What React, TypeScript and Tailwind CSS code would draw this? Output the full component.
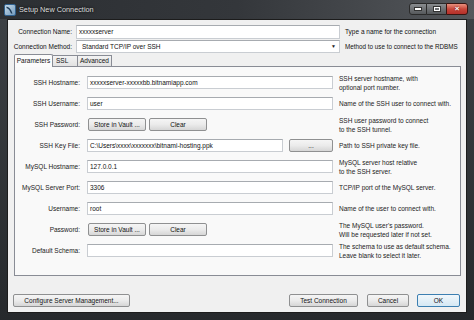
import React from "react";

const inputCls =
  "h-[13px] bg-white border border-[#c9cdd2] border-t-[#a7abb0] px-[2px] flex items-center text-[#111] overflow-hidden whitespace-nowrap";
const btnCls =
  "h-[13px] flex items-center justify-center rounded-[2px] border border-[#8f9091] bg-gradient-to-b from-[#f5f5f5] via-[#ebebeb] to-[#d6d6d6] text-[#111] whitespace-nowrap";

type Row = {
  label: string;
  kind: "input" | "vault" | "file";
  value?: string;
  desc: string[];
};

const rows: Row[] = [
  { label: "SSH Hostname:", kind: "input", value: "xxxxxserver-xxxxxbb.bitnamiapp.com", desc: ["SSH server hostname, with", "optional port number."] },
  { label: "SSH Username:", kind: "input", value: "user", desc: ["Name of the SSH user to connect with."] },
  { label: "SSH Password:", kind: "vault", desc: ["SSH user password to connect", "to the SSH tunnel."] },
  { label: "SSH Key File:", kind: "file", value: "C:\\Users\\xxxx\\xxxxxxx\\bitnami-hosting.ppk", desc: ["Path to SSH private key file."] },
  { label: "MySQL Hostname:", kind: "input", value: "127.0.0.1", desc: ["MySQL server host relative", "to the SSH server."] },
  { label: "MySQL Server Port:", kind: "input", value: "3306", desc: ["TCP/IP port of the MySQL server."] },
  { label: "Username:", kind: "input", value: "root", desc: ["Name of the user to connect with."] },
  { label: "Password:", kind: "vault", desc: ["The MySQL user's password.", "Will be requested later if not set."] },
  { label: "Default Schema:", kind: "input", value: "", desc: ["The schema to use as default schema.", "Leave blank to select it later."] },
];

function Control({ row }: { row: Row }) {
  if (row.kind === "vault") {
    return (
      <div className="w-[246px] flex gap-[3px] pl-[1px]">
        <div className={btnCls + " w-[58px]"}>Store in Vault ...</div>
        <div className={btnCls + " w-[58px]"}>Clear</div>
      </div>
    );
  }
  if (row.kind === "file") {
    return (
      <div className="w-[246px] flex gap-[6px]">
        <div className={inputCls + " w-[196px]"}>{row.value}</div>
        <div className={btnCls + " w-[44px]"}>...</div>
      </div>
    );
  }
  return <div className={inputCls + " w-[246px]"}>{row.value}</div>;
}

function AppIcon() {
  return (
    <svg width="12" height="12" viewBox="0 0 12 12">
      <defs>
        <linearGradient id="ig" x1="0" y1="0" x2="1" y2="1">
          <stop offset="0" stopColor="#c9dcea" />
          <stop offset="1" stopColor="#6f98bd" />
        </linearGradient>
      </defs>
      <rect x="0.5" y="0.5" width="11" height="11" rx="1.5" fill="url(#ig)" stroke="#2f5f8c" />
      <path d="M2.5 2.5 C5 3 7 5 8.5 9.5 L7 9.5 C6 6.5 4.5 4.5 2.5 4 Z" fill="#1d3a57" />
    </svg>
  );
}

export default function App() {
  return (
    <div className="w-[474px] h-[320px] overflow-hidden bg-gradient-to-b from-[#3e4246] to-[#26292c] flex flex-col font-['Liberation_Sans',Arial,sans-serif] text-[6.5px] leading-[8px] text-[#111]">
      {/* Title bar */}
      <div className="h-[19px] flex items-start bg-gradient-to-r from-[#2c2f33] via-[#34373b] to-[#55585c]">
        <div className="ml-[4px] mt-[4px]">
          <AppIcon />
        </div>
        <div className="ml-[3px] mt-[5px] text-[7.3px] leading-[9px] text-[#dedede] [text-shadow:0_0_3px_#000]">
          Setup New Connection
        </div>
        <div className="ml-auto mr-[6px] mt-[3px] flex">
          <div className="w-[18px] h-[12px] border border-[#2a2a2a] rounded-l-[3px] bg-gradient-to-b from-[#8a8d90] to-[#55585b] flex items-end justify-center pb-[3px]">
            <div className="w-[6px] h-[2px] bg-white border border-[#333] box-content" />
          </div>
          <div className="w-[19px] h-[12px] border-y border-[#2a2a2a] bg-gradient-to-b from-[#8a8d90] to-[#55585b] flex items-center justify-center">
            <div className="w-[6px] h-[4px] border-[1.5px] border-white outline outline-1 outline-[#333]" />
          </div>
          <div className="w-[22px] h-[12px] border border-[#3a1410] rounded-r-[3px] bg-gradient-to-b from-[#e8907e] via-[#c8463a] to-[#b4302a] flex items-center justify-center text-white text-[8px] leading-[8px] font-bold [text-shadow:0_0_2px_#600]">
            ×
          </div>
        </div>
      </div>

      {/* Client */}
      <div className="ml-[7px] w-[460px] h-[294px] bg-[#f0f0f0] border border-[#1c1c1c] box-border flex flex-col">
        <div className="pt-[5px] flex flex-col gap-[1px]">
          <div className="flex items-center h-[14px]">
            <div className="w-[64px] text-right">Connection Name:</div>
            <div className={inputCls + " ml-[4px] w-[264px] h-[14px]"}>xxxxxserver</div>
            <div className="ml-[5px]">Type a name for the connection</div>
          </div>
          <div className="flex items-center h-[13px]">
            <div className="w-[64px] text-right">Connection Method:</div>
            <div className={inputCls + " ml-[4px] w-[264px] justify-between pr-[3px]"}>
              <span className="pl-[3px]">Standard TCP/IP over SSH</span>
              <span className="text-[5px] leading-[5px] text-[#222]">▼</span>
            </div>
            <div className="ml-[5px] text-[6.3px]">Method to use to connect to the RDBMS</div>
          </div>
        </div>

        {/* Tabs */}
        <div className="mt-[1px] ml-[6px] flex items-end h-[13px] relative z-10">
          <div className="h-[13px] w-[39px] border border-b-0 border-[#898c95] bg-[#fbfbfb] flex items-start justify-center pt-[2px] rounded-t-[2px]">
            Parameters
          </div>
          <div className="h-[11px] w-[25px] border border-b-0 border-l-0 border-[#898c95] bg-gradient-to-b from-[#f3f3f3] to-[#e2e2e2] flex items-center pl-[3px] mb-[1px]">
            SSL
          </div>
          <div className="h-[11px] w-[34px] border border-b-0 border-l-0 border-[#898c95] bg-gradient-to-b from-[#f3f3f3] to-[#e2e2e2] flex items-center justify-center mb-[1px]">
            Advanced
          </div>
        </div>

        {/* Panel */}
        <div className="-mt-[1px] ml-[6px] w-[447px] h-[210px] border border-[#898c95] bg-[#f9f9f9] pt-[5px] flex flex-col">
          {rows.map((r) => (
            <div key={r.label} className="flex items-center h-[21px]">
              <div className="w-[65px] text-right text-[#222]">{r.label}</div>
              <div className="ml-[7px]">
                <Control row={r} />
              </div>
              <div className="ml-[6px] leading-[9px] text-[#222]">
                {r.desc.map((d) => (
                  <div key={d}>{d}</div>
                ))}
              </div>
            </div>
          ))}
        </div>

        {/* Bottom buttons */}
        <div className="mt-[18px] flex items-center">
          <div className={btnCls + " ml-[5px] w-[117px]"}>Configure Server Management...</div>
          <div className={btnCls + " ml-auto w-[69px]"}>Test Connection</div>
          <div className={btnCls + " ml-[9px] w-[42px]"}>Cancel</div>
          <div className="ml-[8px] mr-[6px] w-[43px] h-[13px] flex items-center justify-center rounded-[2px] border border-[#3c7fb1] bg-gradient-to-b from-[#f1f7fb] to-[#d5e8f4] text-[#111]">
            OK
          </div>
        </div>
      </div>
    </div>
  );
}
